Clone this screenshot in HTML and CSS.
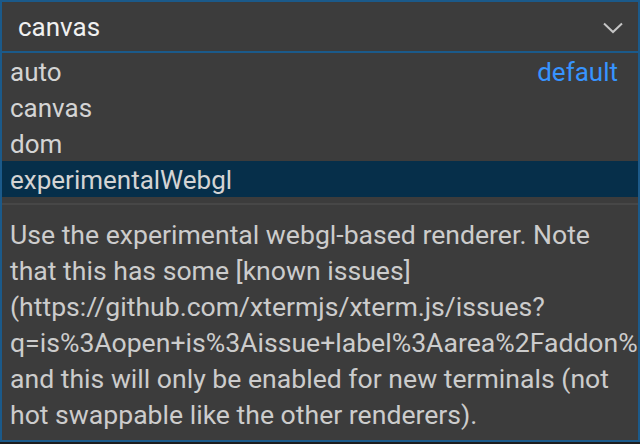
FILE: index.html
```html
<!DOCTYPE html>
<html>
<head>
<meta charset="utf-8">
<link rel="stylesheet" href="styles.css">
</head>
<body>
<div class="select">
  <span class="value">canvas</span>
  <svg class="chevron" width="20" height="12" viewBox="0 0 20 12"><path d="M1 1.5 L10 10 L19 1.5" fill="none" stroke="#c5c5c5" stroke-width="2"/></svg>
</div>
<div class="dropdown">
  <ul class="options">
    <li class="option"><span>auto</span><span class="tag">default</span></li>
    <li class="option"><span>canvas</span></li>
    <li class="option"><span>dom</span></li>
    <li class="option selected"><span>experimentalWebgl</span></li>
  </ul>
  <div class="desc">Use the experimental webgl-based renderer. Note<br>that this has some [known issues]<br>(https://github.com/xtermjs/xterm.js/issues?<br>q=is%3Aopen+is%3Aissue+label%3Aarea%2Faddon%2Fwebgl)<br>and this will only be enabled for new terminals (not<br>hot swappable like the other renderers).</div>
</div>
</body>
</html>
```
FILE: styles.css
```css
html, body {
  margin: 0;
  padding: 0;
  background: #1e1e1e;
  width: 640px;
  height: 444px;
  overflow: hidden;
  font-family: Roboto, Inter, "Noto Sans", sans-serif;
}
.select {
  box-sizing: border-box;
  height: 53px;
  border: 2px solid #1b5a8a;
  background: #3c3c3c;
  display: flex;
  align-items: center;
  justify-content: space-between;
  padding: 0 15px 0 16px;
}
.value {
  color: #f0f0f0;
  font-size: 26px;
}
.chevron {
  display: block;
  margin-top: 2px;
}
.dropdown {
  box-sizing: border-box;
  height: 389px;
  background: #3c3c3c;
  border: 2px solid #1b5a8a;
  border-top: none;
  overflow: hidden;
}
.options {
  list-style: none;
  margin: 0;
  padding: 0;
}
.option {
  height: 36px;
  display: flex;
  align-items: center;
  justify-content: space-between;
  padding: 2px 20px 0 8px;
  box-sizing: border-box;
  color: #d4d4d4;
  font-size: 26px;
}
.option.selected {
  background: #062f4a;
}
.tag {
  color: #3794ff;
}
.desc {
  margin-top: 6px;
  border-top: 2px solid #474747;
  padding: 12px 8px 0 8px;
  color: #cccccc;
  font-size: 26.6px;
  line-height: 36px;
  white-space: nowrap;
}
```
